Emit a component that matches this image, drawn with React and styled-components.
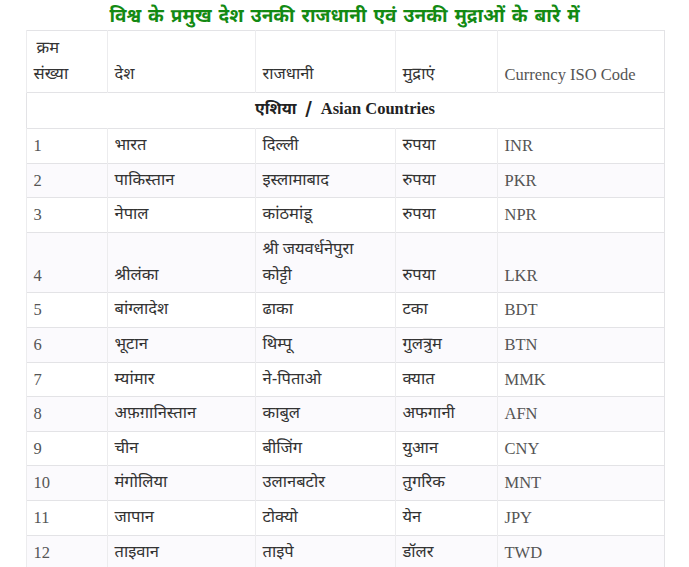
import styled, { createGlobalStyle } from "styled-components";

const GlobalStyle = createGlobalStyle`
  body {
    margin: 0;
    background: #fff;
    font-family: "Noto Sans Devanagari", "Lohit Devanagari", "Noto Sans", sans-serif;
  }
`;

const Page = styled.div`
  width: 638px;
  margin: 0 auto;
  padding-top: 6px;
`;

const Title = styled.h2`
  margin: 0;
  text-align: center;
  color: #138a13;
  font-size: 19px;
  font-weight: bold;
  line-height: 24px;
  word-spacing: 2px;
`;

const Table = styled.table`
  width: 100%;
  border-collapse: collapse;
  table-layout: fixed;
  border: 1px solid #e3e3e6;
  color: #333;
`;

const Row = styled.tr`
  background: ${(p) => (p.$shade ? "#fbfafd" : "#fff")};
  border-bottom: 1px solid #e3e3e6;
`;

const Cell = styled.td`
  padding: 4px 7px 3.6px;
  line-height: 26px;
  vertical-align: bottom;
  border-left: 1px solid #ececee;
  white-space: nowrap;
  font-family: ${(p) =>
    p.$latin
      ? '"Liberation Serif", "Times New Roman", serif'
      : 'inherit'};
  color: ${(p) => (p.$latin ? "#555" : "#333")};
  font-size: 16.5px;
`;

const HeadCell = styled(Cell)`
  padding-top: 4.5px;
  padding-bottom: 4.5px;
`;

const Indent = styled.span`
  padding-left: 3px;
`;

const Region = styled.td`
  padding: 5px 7px 4px;
  line-height: 26px;
  text-align: center;
  font-weight: bold;
  font-size: 16px;
  color: #222;
`;

const Latin = styled.span`
  font-family: "Liberation Serif", "Times New Roman", serif;
  font-size: 16.5px;
  line-height: 1;
`;

const countries = [
  ["1", "भारत", "दिल्ली", "रुपया", "INR"],
  ["2", "पाकिस्तान", "इस्लामाबाद", "रुपया", "PKR"],
  ["3", "नेपाल", "कांठमांडू", "रुपया", "NPR"],
  ["4", "श्रीलंका", "श्री जयवर्धनेपुरा कोट्टी", "रुपया", "LKR"],
  ["5", "बांग्लादेश", "ढाका", "टका", "BDT"],
  ["6", "भूटान", "थिम्पू", "गुलत्रुम", "BTN"],
  ["7", "म्यांमार", "ने-पिताओ", "क्यात", "MMK"],
  ["8", "अफ़ग़ानिस्तान", "काबुल", "अफगानी", "AFN"],
  ["9", "चीन", "बीजिंग", "युआन", "CNY"],
  ["10", "मंगोलिया", "उलानबटोर", "तुगरिक", "MNT"],
  ["11", "जापान", "टोक्यो", "येन", "JPY"],
  ["12", "ताइवान", "ताइपे", "डॉलर", "TWD"],
];

export default function App() {
  return (
    <>
      <GlobalStyle />
      <Page>
        <Title>विश्व के प्रमुख देश उनकी राजधानी एवं उनकी मुद्राओं के बारे में</Title>
        <Table>
          <colgroup>
            <col style={{ width: 81 }} />
            <col style={{ width: 148 }} />
            <col style={{ width: 140 }} />
            <col style={{ width: 102 }} />
            <col style={{ width: 167 }} />
          </colgroup>
          <tbody>
            <Row>
              <HeadCell><Indent>क्रम</Indent><br />संख्या</HeadCell>
              <HeadCell>देश</HeadCell>
              <HeadCell>राजधानी</HeadCell>
              <HeadCell>मुद्राएं</HeadCell>
              <HeadCell $latin>Currency ISO Code</HeadCell>
            </Row>
            <Row>
              <Region colSpan={5}>
                एशिया&nbsp; /&nbsp; <Latin>Asian Countries</Latin>
              </Region>
            </Row>
            {countries.map(([n, country, capital, currency, code]) => (
              <Row key={n} $shade={Number(n) % 2 === 0}>
                <Cell $latin>{n}</Cell>
                <Cell>{country}</Cell>
                <Cell>{n === "4" ? <>श्री जयवर्धनेपुरा<br />कोट्टी</> : capital}</Cell>
                <Cell>{currency}</Cell>
                <Cell $latin>{code}</Cell>
              </Row>
            ))}
          </tbody>
        </Table>
      </Page>
    </>
  );
}
